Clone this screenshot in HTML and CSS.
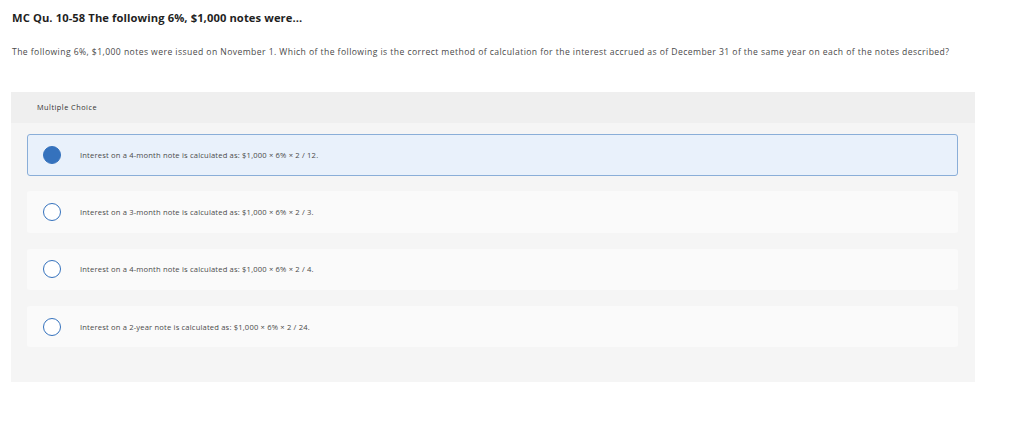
FILE: index.html
```html
<!DOCTYPE html>
<html lang="en">
<head>
  <meta charset="UTF-8">
  <title>MC Qu. 10-58</title>
  <link rel="stylesheet" href="styles.css">
</head>
<body>
  <div class="page">
    <h1 class="title">MC Qu. 10-58 The following 6%, $1,000 notes were...</h1>
    <p class="prompt">The following 6%, $1,000 notes were issued on November 1. Which of the following is the correct method of calculation for the interest accrued as of December 31 of the same year on each of the notes described?</p>

    <div class="question">
      <div class="question-head">Multiple Choice</div>
      <div class="choices">
        <div class="choice selected">
          <span class="radio"></span>
          <span class="choice-text">Interest on a 4-month note is calculated as: $1,000 × 6% × 2 / 12.</span>
        </div>
        <div class="choice">
          <span class="radio"></span>
          <span class="choice-text">Interest on a 3-month note is calculated as: $1,000 × 6% × 2 / 3.</span>
        </div>
        <div class="choice">
          <span class="radio"></span>
          <span class="choice-text">Interest on a 4-month note is calculated as: $1,000 × 6% × 2 / 4.</span>
        </div>
        <div class="choice">
          <span class="radio"></span>
          <span class="choice-text">Interest on a 2-year note is calculated as: $1,000 × 6% × 2 / 24.</span>
        </div>
      </div>
    </div>
  </div>
</body>
</html>
```

FILE: styles.css
```css
:root {
  --text: #1f1f1f;
  --muted: #4a4a4a;
  --panel: #f5f5f5;
  --panel-head: #efefef;
  --choice-bg: #fafafa;
  --selected-bg: #e9f1fb;
  --selected-border: #8aaed8;
  --blue: #3572bd;
}

body {
  margin: 0;
  background: #fff;
  font-family: "Open Sans", Lato, sans-serif;
  color: var(--text);
}

.page {
  padding: 11px 49px 0 11px;
}

.title {
  margin: 0 0 0 1px;
  font-size: 11.2px;
  font-weight: 700;
  letter-spacing: 0.1px;
  line-height: 14px;
}

.prompt {
  margin: 21px 0 0 1px;
  font-size: 8.6px;
  letter-spacing: 0.43px;
  line-height: 12px;
  color: var(--muted);
}

.question {
  margin-top: 34px;
  background: var(--panel);
  padding-bottom: 35px;
}

.question-head {
  background: var(--panel-head);
  height: 31px;
  line-height: 31px;
  padding-left: 26px;
  font-size: 7.3px;
  letter-spacing: 0.5px;
  color: #333;
}

.choices {
  display: flex;
  flex-direction: column;
  gap: 15.8px;
  padding: 11px 17px 0 16px;
}

.choice {
  display: flex;
  align-items: center;
  height: 41.5px;
  box-sizing: border-box;
  padding-left: 16px;
  background: var(--choice-bg);
  border-radius: 3px;
}

.choice.selected {
  background: var(--selected-bg);
  border: 1px solid var(--selected-border);
  padding-left: 15px;
}

.radio {
  width: 18px;
  height: 18px;
  box-sizing: border-box;
  border: 1px solid var(--blue);
  border-radius: 50%;
  background: #fff;
  flex-shrink: 0;
}

.selected .radio {
  background: var(--blue);
}

.choice-text {
  margin-left: 19px;
  font-size: 7.6px;
  letter-spacing: 0.17px;
  color: var(--muted);
}
```
